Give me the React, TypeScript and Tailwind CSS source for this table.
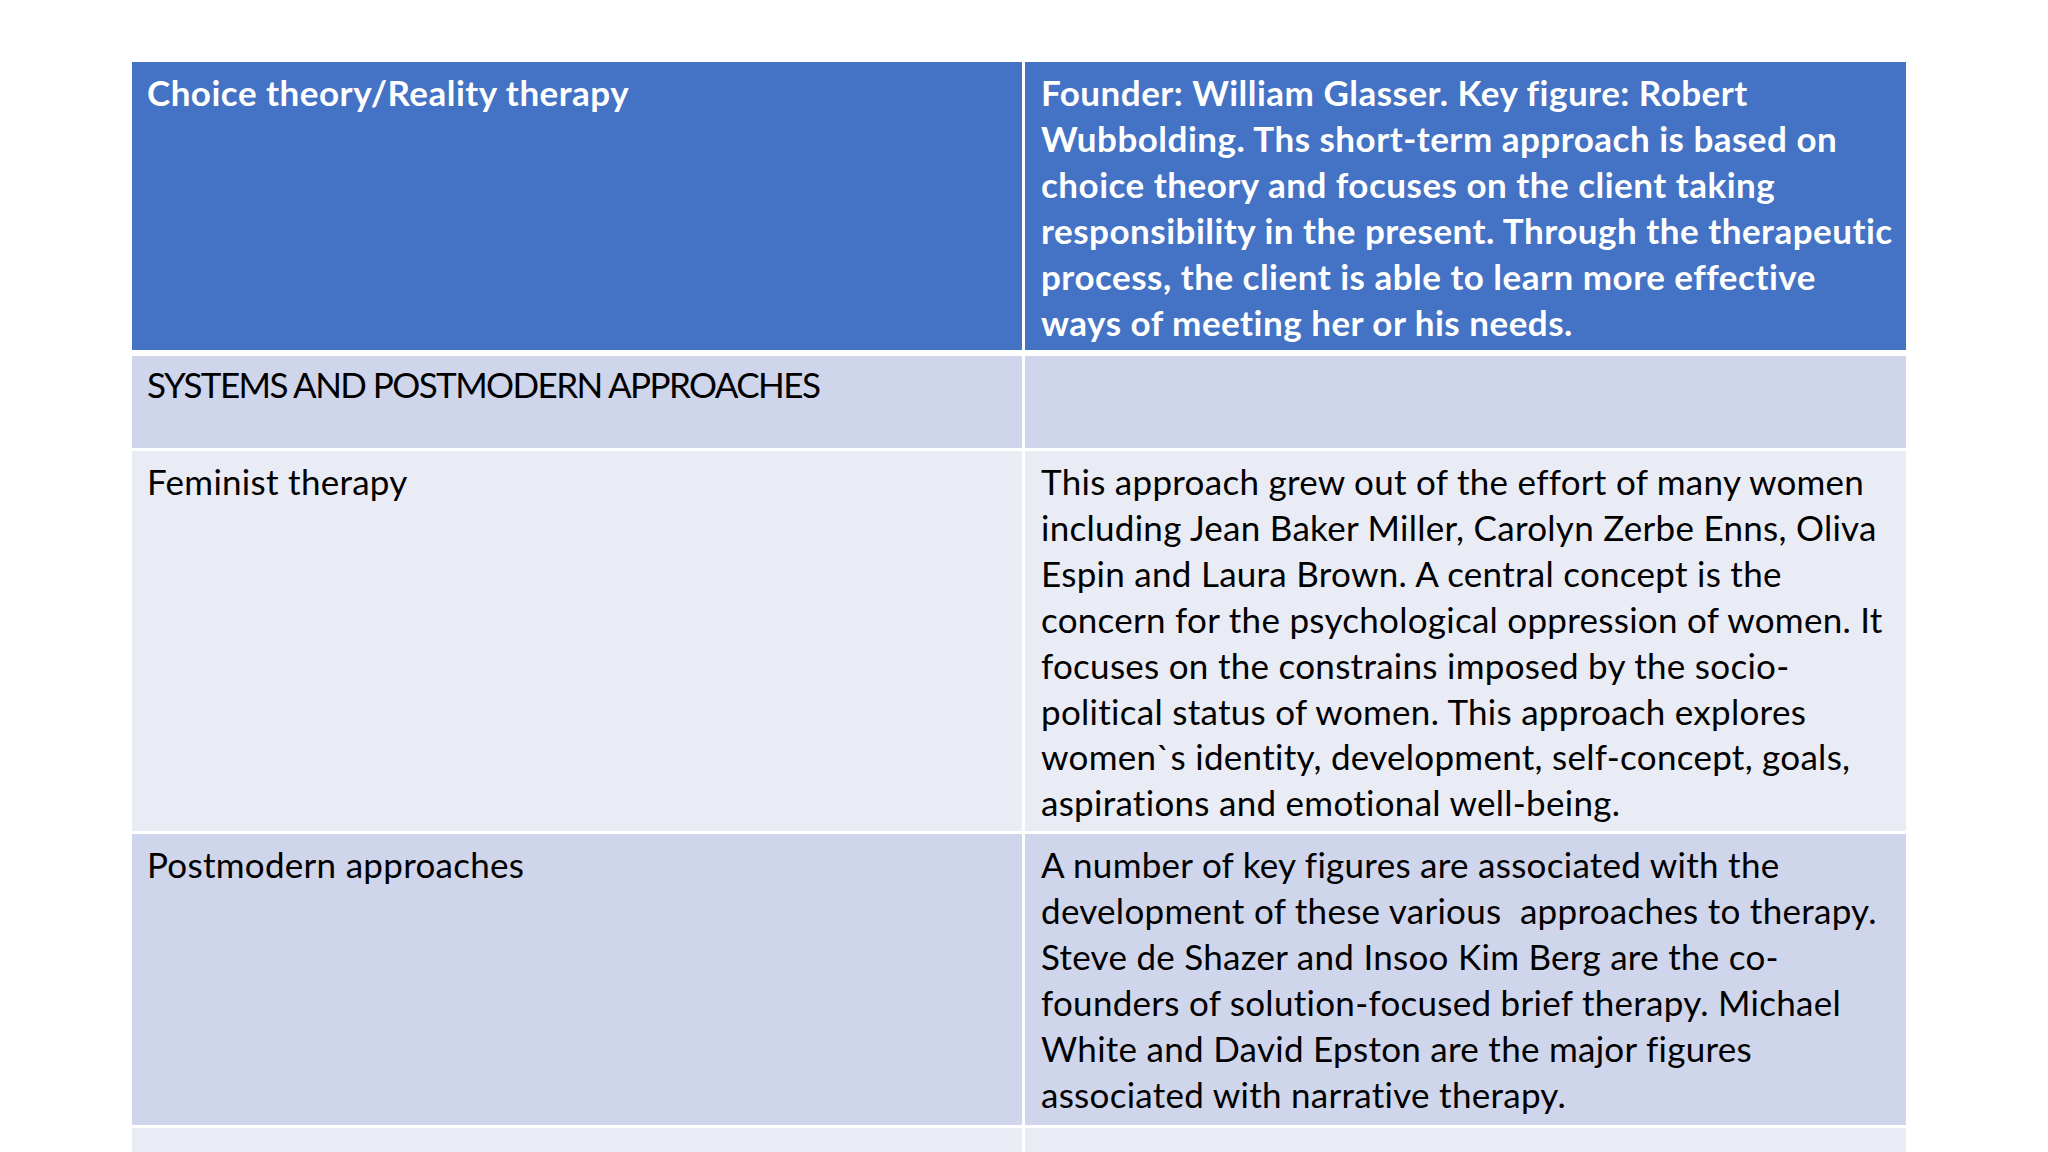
const header = {
  left: ["Choice theory/Reality therapy"],
  right: [
    "Founder: William Glasser. Key figure: Robert",
    "Wubbolding. Ths short-term approach is based on",
    "choice theory and focuses on the client taking",
    "responsibility in the present. Through the therapeutic",
    "process, the client is able to learn more effective",
    "ways of meeting her or his needs.",
  ],
};

const rows = [
  {
    left: ["SYSTEMS AND POSTMODERN APPROACHES"],
    right: [],
    tone: "dark",
    height: "h-[92px]",
    caps: true,
  },
  {
    left: ["Feminist therapy"],
    right: [
      "This approach grew out of the effort of many women",
      "including Jean Baker Miller, Carolyn Zerbe Enns, Oliva",
      "Espin and Laura Brown. A central concept is the",
      "concern for the psychological oppression of women. It",
      "focuses on the constrains imposed by the socio-",
      "political status of women. This approach explores",
      "women`s identity, development, self-concept, goals,",
      "aspirations and emotional well-being.",
    ],
    tone: "light",
    height: "h-[380px]",
  },
  {
    left: ["Postmodern approaches"],
    right: [
      "A number of key figures are associated with the",
      "development of these various\u00a0 approaches to therapy.",
      "Steve de Shazer and Insoo Kim Berg are the co-",
      "founders of solution-focused brief therapy. Michael",
      "White and David Epston are the major figures",
      "associated with narrative therapy.",
    ],
    tone: "dark",
    height: "h-[291px]",
  },
  {
    left: [],
    right: [],
    tone: "light",
    height: "h-[120px]",
  },
];

function Lines({ lines }: { lines: string[] }) {
  return (
    <>
      {lines.map((line, i) => (
        <span key={i} className="block whitespace-pre">
          {line}
        </span>
      ))}
    </>
  );
}

export default function App() {
  return (
    <div className="h-[1152px] w-[2048px] overflow-hidden bg-white pl-[132px] pt-[62px] font-['Lato','Noto_Sans',sans-serif] text-[35px] leading-[45.9px]">
      <div className="flex w-[1774px] flex-col">
        <div className="mb-[6px] grid h-[288px] grid-cols-[890px_881px] gap-x-[3px] font-bold tracking-[0.014em] text-white">
          <div className="bg-[#4472c4] pl-[15px] pt-[8px]">
            <Lines lines={header.left} />
          </div>
          <div className="bg-[#4472c4] pl-[16px] pt-[8px]">
            <Lines lines={header.right} />
          </div>
        </div>
        <div className="flex flex-col gap-[3px] text-black">
          {rows.map((row, i) => {
            const bg = row.tone === "dark" ? "bg-[#cfd5ea]" : "bg-[#e9ebf5]";
            return (
              <div key={i} className={`grid grid-cols-[890px_881px] gap-x-[3px] ${row.height}`}>
                <div
                  className={`${bg} pl-[15px] ${
                    row.caps ? "pt-[6px] tracking-[-0.045em]" : "pt-[8px] tracking-[0.008em]"
                  }`}
                >
                  <Lines lines={row.left} />
                </div>
                <div className={`${bg} pl-[16px] pt-[8px] tracking-[0.008em]`}>
                  <Lines lines={row.right} />
                </div>
              </div>
            );
          })}
        </div>
      </div>
    </div>
  );
}
